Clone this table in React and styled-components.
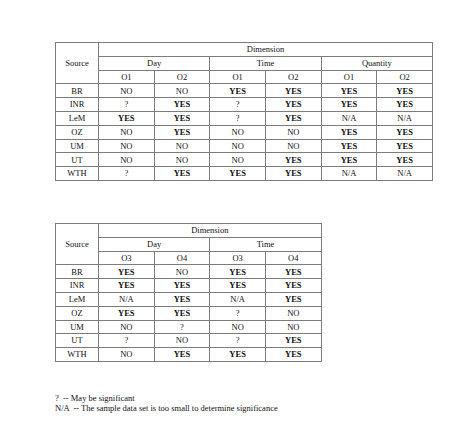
import React from "react";
import styled, { createGlobalStyle } from "styled-components";

const Global = createGlobalStyle`
  html, body { margin: 0; padding: 0; background: #fff; }
  body { font-family: "Liberation Serif", "Times New Roman", serif; color: #111; }
`;

const Page = styled.div`
  width: 474px;
  height: 422px;
  box-sizing: border-box;
  padding: 42px 0 0 55px;
  display: flex;
  flex-direction: column;
  align-items: flex-start;
`;

const Table = styled.table`
  border-collapse: collapse;
  table-layout: fixed;
  width: ${(p) => p.$width}px;
  font-size: 8.5px;
  margin-bottom: ${(p) => p.$gap}px;
`;

const Cell = styled.td`
  border: 1px solid #7c7c7c;
  height: 12.8px;
  padding: 0;
  text-align: center;
  vertical-align: middle;
  line-height: 1;
  font-weight: ${(p) => (p.$bold ? 700 : 400)};
`;

const Notes = styled.div`
  font-size: 8.5px;
  line-height: 10px;
`;

const NoteLine = styled.div`
  white-space: pre;
`;

const t1 = {
  groups: ["Day", "Time", "Quantity"],
  subs: ["O1", "O2", "O1", "O2", "O1", "O2"],
  rows: [
    ["BR", "NO", "NO", "YES", "YES", "YES", "YES"],
    ["INR", "?", "YES", "?", "YES", "YES", "YES"],
    ["LeM", "YES", "YES", "?", "YES", "N/A", "N/A"],
    ["OZ", "NO", "YES", "NO", "NO", "YES", "YES"],
    ["UM", "NO", "NO", "NO", "NO", "YES", "YES"],
    ["UT", "NO", "NO", "NO", "YES", "YES", "YES"],
    ["WTH", "?", "YES", "YES", "YES", "N/A", "N/A"],
  ],
};

const t2 = {
  groups: ["Day", "Time"],
  subs: ["O3", "O4", "O3", "O4"],
  rows: [
    ["BR", "YES", "NO", "YES", "YES"],
    ["INR", "YES", "YES", "YES", "YES"],
    ["LeM", "N/A", "YES", "N/A", "YES"],
    ["OZ", "YES", "YES", "?", "NO"],
    ["UM", "NO", "?", "NO", "NO"],
    ["UT", "?", "NO", "?", "YES"],
    ["WTH", "NO", "YES", "YES", "YES"],
  ],
};

function DataTable({ data, gap }) {
  const n = data.subs.length;
  const width = 43 + n * 55.67;
  return (
    <Table $width={width} $gap={gap}>
      <colgroup>
        <col style={{ width: 43 }} />
        {data.subs.map((_, i) => (
          <col key={i} style={{ width: 55.67 }} />
        ))}
      </colgroup>
      <tbody>
        <tr>
          <Cell rowSpan={3}>Source</Cell>
          <Cell colSpan={n}>Dimension</Cell>
        </tr>
        <tr>
          {data.groups.map((g) => (
            <Cell key={g} colSpan={2}>
              {g}
            </Cell>
          ))}
        </tr>
        <tr>
          {data.subs.map((s, i) => (
            <Cell key={i}>{s}</Cell>
          ))}
        </tr>
        {data.rows.map((r) => (
          <tr key={r[0]}>
            {r.map((v, i) => (
              <Cell key={i} $bold={v === "YES"}>
                {v}
              </Cell>
            ))}
          </tr>
        ))}
      </tbody>
    </Table>
  );
}

export default function App() {
  return (
    <>
      <Global />
      <Page>
        <DataTable data={t1} gap={42} />
        <DataTable data={t2} gap={31} />
        <Notes>
          <NoteLine>{"?  -- May be significant"}</NoteLine>
          <NoteLine>{"N/A  -- The sample data set is too small to determine significance"}</NoteLine>
        </Notes>
      </Page>
    </>
  );
}
